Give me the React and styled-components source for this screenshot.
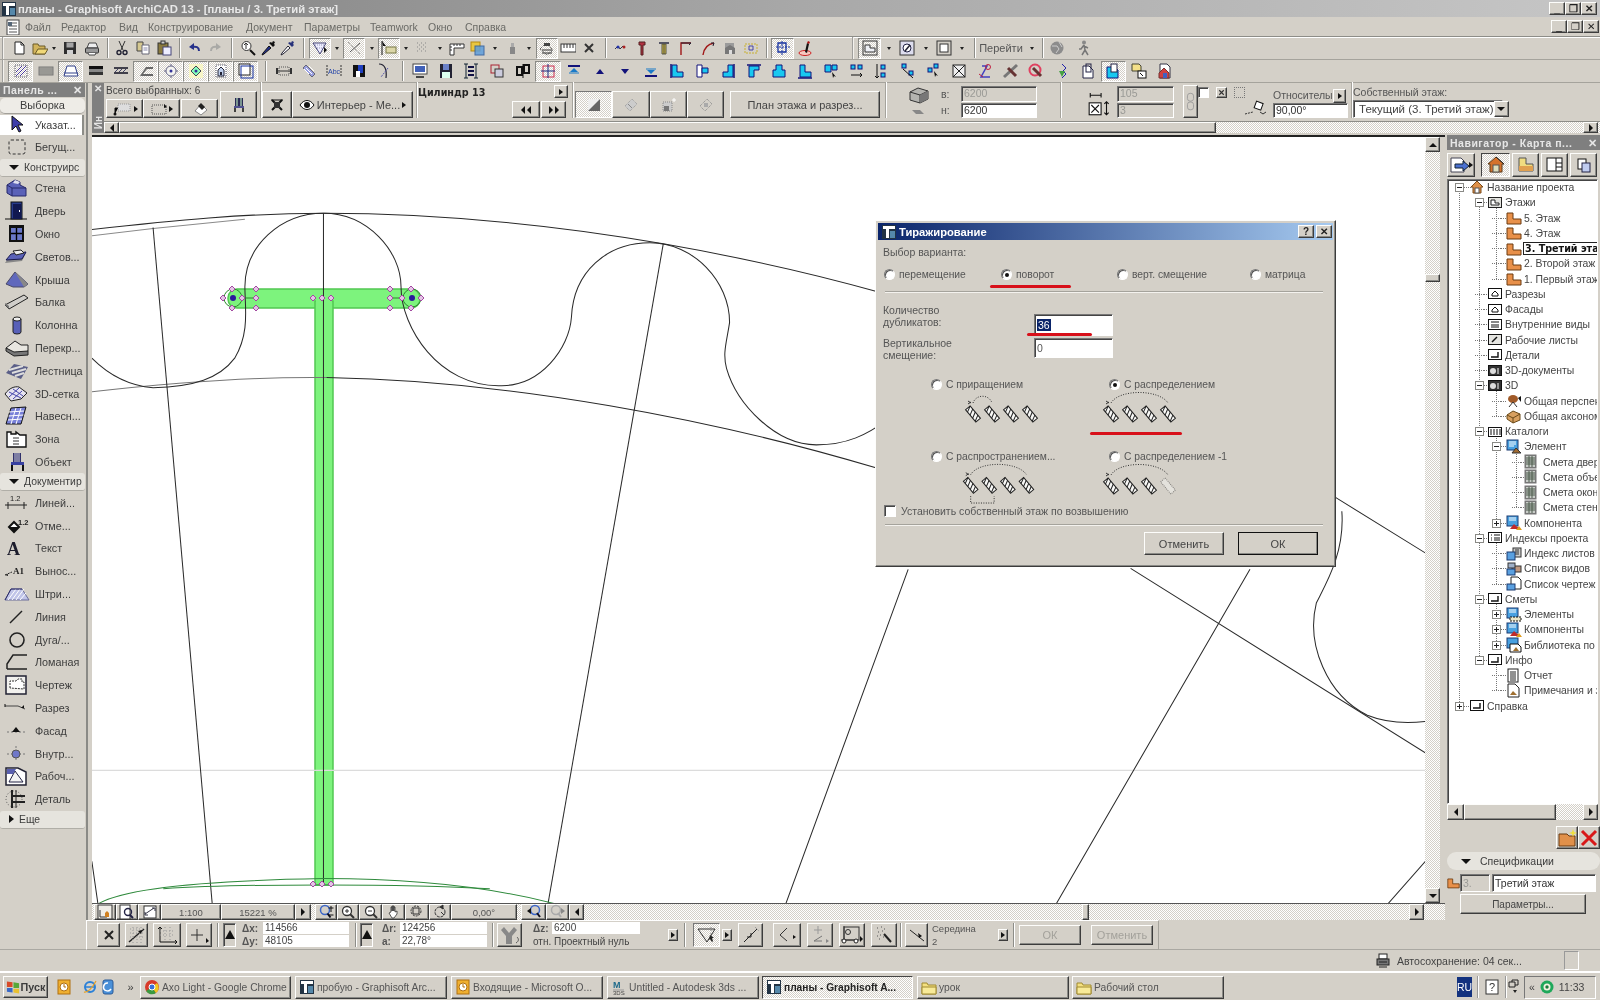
import React from 'react';
import styled, { createGlobalStyle, css } from 'styled-components';

const Global = createGlobalStyle`
  html, body { margin: 0; padding: 0; background: #d4d0c8; }
  * { box-sizing: border-box; }
`;

const FACE = '#d4d0c8';
const raised = css`
  background: ${FACE};
  border: 1px solid;
  border-color: #fdfdfb #3c3c3c #3c3c3c #fdfdfb;
  box-shadow: inset -1px -1px 0 #8a8a86;
`;
const sunken = css`
  border: 1px solid;
  border-color: #777 #fff #fff #777;
  box-shadow: inset 1px 1px 0 #444;
`;
const dither = css`
  background: repeating-conic-gradient(#fff 0 25%, ${FACE} 0 50%) 0 0 / 2px 2px;
`;

const Screen = styled.div`
  position: relative;
  width: 1600px;
  height: 1000px;
  overflow: hidden;
  display: flex;
  flex-direction: column;
  background: ${FACE};
  font: 11px "Liberation Sans", Arial, sans-serif;
  color: #3c3c3c;
  filter: blur(0.45px);
`;

/* ---------- window chrome ---------- */
const TitleBar = styled.div`
  height: 17px;
  flex: none;
  display: flex;
  align-items: center;
  padding: 0 2px 0 1px;
  gap: 1px;
  background: linear-gradient(90deg, #7e7e7e, #a8a8a8 50%, #c6c6c6);
  color: #e8e8e8;
  font-weight: 700;
  font-size: 11.3px;
`;
const Grow = styled.div`flex: 1;`;
const WinBtn = styled.div`
  ${raised}
  width: 16px;
  height: 13px;
  display: flex;
  align-items: center;
  justify-content: center;
  font-size: 10px;
  line-height: 1;
  color: #222;
`;
const WinBtns = styled.div`
  display: flex;
  margin-right: 1px;
`;
const MenuBar = styled.div`
  height: 20px;
  flex: none;
  display: flex;
  align-items: center;
  padding-left: 5px;
  border-bottom: 1px solid #8d8d88;
  box-shadow: 0 1px 0 #fff;
`;
const MenuItem = styled.span`
  color: #6a6a66;
  font-size: 10.5px;
  width: ${p => p.$w}px;
  white-space: nowrap;
`;
const MenuIcon = styled.div`
  width: 20px;
  display: flex;
`;

/* ---------- toolbars ---------- */
const ToolRow = styled.div`
  height: 23px;
  flex: none;
  display: flex;
  align-items: center;
  padding-left: 2px;
  border-bottom: 1px solid #a5a39c;
`;
const ToolStrip = styled.div`
  display: flex;
  align-items: center;
  height: 22px;
  margin-left: ${p => p.$ml || 0}px;
  padding-left: 4px;
  border-left: 2px groove #f4f2ee;
`;
const Tool = styled.div`
  width: ${p => p.$w}px;
  height: 21px;
  flex: none;
  display: flex;
  align-items: center;
  justify-content: center;
  ${p => p.$on && css`
    ${dither}
    border: 1px solid;
    border-color: #8a8a86 #fff #fff #8a8a86;
  `}
`;
const Drop = styled.div`
  width: ${p => p.$w}px;
  height: 21px;
  flex: none;
  display: flex;
  align-items: center;
  justify-content: center;
  &::after {
    content: "";
    border: 2.5px solid transparent;
    border-top: 3px solid #222;
    border-bottom: 0;
  }
`;
const ToolSep = styled.div`
  width: ${p => p.$w}px;
  height: 20px;
  flex: none;
  position: relative;
  &::after {
    content: "";
    position: absolute;
    left: 50%;
    top: 0;
    bottom: 0;
    border-left: 1px solid #8d8d88;
    box-shadow: 1px 0 0 #fff;
  }
`;
const GoText = styled.span`
  width: 48px;
  text-align: center;
  color: #555;
  font-size: 11px;
`;

/* ---------- page body ---------- */
const Body = styled.div`
  flex: none;
  height: 837px;
  display: grid;
  grid-template-columns: 92px 1353px 155px;
  grid-template-rows: 52px 785px;
`;

/* left palette */
const Palette = styled.div`
  grid-column: 1;
  grid-row: 1 / 3;
  width: 88px;
  display: flex;
  flex-direction: column;
  border-right: 2px solid #8a8a86;
  padding-right: 1px;
`;
const PanelTitle = styled.div`
  height: 14px;
  flex: none;
  display: flex;
  justify-content: space-between;
  align-items: center;
  padding: 0 3px;
  background: #7f7f7f;
  color: #e6e6e6;
  font-weight: 700;
  font-size: 10.5px;
  letter-spacing: .4px;
`;
const PickBtn = styled.div`
  height: 16px;
  margin: 1px 0;
  flex: none;
  border-radius: 5px;
  background: #eeece7;
  border-bottom: 1px solid #a2a09a;
  text-align: center;
  line-height: 15px;
`;
const PalItem = styled.div`
  height: ${p => p.$h || 22.8}px;
  flex: none;
  display: grid;
  grid-template-columns: 35px 1fr;
  align-items: center;
  font-size: 10.8px;
  white-space: nowrap;
  overflow: hidden;
  ${p => p.$sel && css`background: #fff; border-right: 2px solid #8d8d88; margin-right:1px;`}
`;
const PalIcon = styled.div`
  display: flex;
  justify-content: center;
  padding-right: 1px;
`;
const PalHead = styled.div`
  height: 18px;
  flex: none;
  display: flex;
  align-items: center;
  gap: 5px;
  padding-left: 9px;
  background: #e6e4de;
  border-radius: 3px;
  border-bottom: 1px solid #b0aea7;
  font-size: 10.4px;
  white-space: nowrap;
`;
const TriDown = styled.span`
  border: 5px solid transparent;
  border-top: 5px solid #111;
  border-bottom: 0;
  flex: none;
`;
const TriRight = styled.span`
  border: 4px solid transparent;
  border-left: 5px solid #111;
  border-right: 0;
  flex: none;
`;

/* info box */
const InfoArea = styled.div`
  grid-column: 2 / 4;
  grid-row: 1;
  display: grid;
  grid-template-columns: 12px 1fr;
  grid-template-rows: 39px 13px;
`;
const InfoGrip = styled.div`
  grid-row: 1 / 3;
  background: #7f7f7f;
  color: #e6e6e6;
  display: flex;
  flex-direction: column;
  justify-content: space-between;
  align-items: center;
  font-size: 10px;
  font-weight: 700;
  padding-bottom: 4px;
  height: 50px;
`;
const GripLabel = styled.span`
  writing-mode: vertical-rl;
  transform: rotate(180deg);
`;
const InfoRow = styled.div`
  display: flex;
  align-items: flex-end;
  padding: 0 0 3px 2px;
  border-bottom: 1px solid #8d8d88;
`;
const InfoGroup = styled.div`
  width: ${p => p.$w}px;
  margin-left: ${p => p.$ml || 0}px;
  flex: none;
  display: flex;
  align-items: flex-end;
`;
const InfoStack = styled.div`
  display: flex;
  flex-direction: column;
  gap: ${p => p.$gap || 0}px;
  width: ${p => p.$w}px;
  margin-left: ${p => p.$ml || 0}px;
  flex: none;
`;
const InfoLabel = styled.div`
  font-size: 10px;
  letter-spacing: .1px;
  height: 16px;
  line-height: 15px;
  color: #444;
  white-space: nowrap;
`;
const Bevel = styled.div`
  ${raised}
  width: ${p => p.$w}px;
  height: ${p => p.$h}px;
  margin-left: ${p => p.$ml || 0}px;
  flex: none;
  display: flex;
  align-items: center;
  justify-content: center;
  gap: 2px;
  font-size: 11px;
  color: #444;
  white-space: nowrap;
  ${p => p.$on && css`
    ${dither}
    border-color: #777 #fff #fff #777;
    box-shadow: none;
  `}
`;
const SmallTriR = styled.span`
  border: 3px solid transparent;
  border-left: 4px solid #111;
  border-right: 0;
`;
const BoldTitle = styled.div`
  font: 700 9.6px "DejaVu Sans", sans-serif;
  color: #222;
  white-space: nowrap;
`;
const Field = styled.div`
  ${sunken}
  width: ${p => p.$w}px;
  height: ${p => p.$h || 15}px;
  margin-left: ${p => p.$ml || 0}px;
  flex: none;
  background: ${p => (p.$off ? FACE : '#fff')};
  color: ${p => (p.$off ? '#9a9a96' : '#333')};
  padding: 0 2px;
  font-size: 10.5px;
  line-height: 13px;
  white-space: nowrap;
  overflow: hidden;
`;
const MiniLabel = styled.div`
  width: ${p => p.$w}px;
  font-size: 10.5px;
  color: #555;
  height: ${p => p.$h}px;
  line-height: ${p => p.$h}px;
  white-space: nowrap;
`;
const Rule = styled.div`
  width: 2px;
  height: 36px;
  margin-left: ${p => p.$ml || 0}px;
  flex: none;
  border-left: 1px solid #a5a39c;
  border-right: 1px solid #fff;
`;
const CheckCol = styled.div`
  width: 70px;
  height: 33px;
  flex: none;
  display: flex;
  flex-direction: column;
  justify-content: space-between;
  align-items: flex-end;
  padding-top: 2px;
`;
const CheckBoxes = styled.div`
  display: flex;
  gap: 7px;
  align-self: flex-start;
`;
const BoxDotted = styled.div`
  width: 11px;
  height: 11px;
  border: 1px dotted #777;
`;
const SelectBox = styled.div`
  ${sunken}
  width: 150px;
  height: 18px;
  background: #fff;
  display: flex;
  align-items: center;
  justify-content: space-between;
  padding-left: 5px;
  font-size: 11.5px;
  color: #444;
  white-space: nowrap;
`;
const SelectArrow = styled.div`
  ${raised}
  width: 15px;
  height: 16px;
  display: flex;
  align-items: center;
  justify-content: center;
  flex: none;
  &::after {
    content: "";
    border: 4px solid transparent;
    border-top: 4px solid #111;
    border-bottom: 0;
  }
`;
const ScrollStrip = styled.div`
  ${dither}
  display: flex;
  align-items: stretch;
  height: 11px;
  margin-top: 0;
`;
const StripBtn = styled.div`
  ${raised}
  width: ${p => p.$w}px;
  height: 11px;
  flex: none;
  ${p => p.$last && 'margin-left: auto; margin-right: 2px;'}
  display: flex;
  align-items: center;
  justify-content: center;
`;

/* canvas */
const CanvasCol = styled.div`
  grid-column: 2;
  grid-row: 2;
  display: flex;
  flex-direction: column;
  border-top: 2px solid #222;
  height: 785px;
`;
const CanvasRow = styled.div`
  display: flex;
  height: 766px;
  flex: none;
`;
const Canvas = styled.svg`
  display: block;
  width: 1333px;
  height: 766px;
  background: #fff;
  flex: none;
`;
const VScroll = styled.div`
  ${dither}
  width: 15px;
  flex: none;
  display: flex;
  flex-direction: column;
  justify-content: space-between;
`;
const ScrollBtn = styled.div`
  ${raised}
  width: 15px;
  height: 15px;
  display: flex;
  align-items: center;
  justify-content: center;
  flex: none;
`;
const Thumb = styled.div`
  ${raised}
  width: 15px;
  height: 8px;
  margin-top: 122px;
  margin-bottom: auto;
`;
const ArrowUp = styled.span`
  border: 4px solid transparent;
  border-bottom: 4px solid #111;
  border-top: 0;
`;
const ArrowDown = styled.span`
  border: 4px solid transparent;
  border-top: 4px solid #111;
  border-bottom: 0;
`;
const ArrowLeft = styled.span`
  border: 4px solid transparent;
  border-right: 4px solid #111;
  border-left: 0;
`;
const ArrowRight = styled.span`
  border: 4px solid transparent;
  border-left: 4px solid #111;
  border-right: 0;
`;
const BottomBar = styled.div`
  height: 17px;
  flex: none;
  display: flex;
  align-items: stretch;
  ${dither}
  border-top: 1px solid #555;
  padding-left: 2px;
`;
const BarBtn = styled.div`
  ${raised}
  width: ${p => p.$w}px;
  margin-left: ${p => p.$ml || 0}px;
  flex: none;
  display: flex;
  align-items: center;
  justify-content: center;
  font-size: 9.5px;
  color: #555;
`;
const BarEnd = styled(BarBtn)`
  margin-left: ${p => p.$ml}px;
`;

/* navigator */
const Nav = styled.div`
  grid-column: 3;
  grid-row: 2;
  display: flex;
  flex-direction: column;
  padding-left: 2px;
`;
const NavTitle = styled(PanelTitle)`
  height: 15px;
  letter-spacing: .5px;
  margin-right: 0;
`;
const NavTabs = styled.div`
  display: flex;
  height: 25px;
  align-items: center;
  margin-top: 2px;
  flex: none;
`;
const NavTab = styled.div`
  ${raised}
  width: ${p => p.$w}px;
  height: 24px;
  margin-left: ${p => p.$ml || 0}px;
  flex: none;
  display: flex;
  align-items: center;
  justify-content: center;
  ${p => p.$on && css`
    ${dither}
    border-color: #444 #fff #fff #444;
    box-shadow: none;
  `}
`;
const Tree = styled.div`
  position: relative;
  height: 625px;
  width: 151px;
  flex: none;
  margin-top: 2px;
  background: #fff;
  ${sunken}
  padding-top: 0;
  overflow: hidden;
`;
const TreeRow = styled.div`
  height: 15.25px;
  display: flex;
  align-items: center;
  padding-left: ${p => p.$pad}px;
  white-space: nowrap;
  position: relative;
  font-size: 10.4px;
  color: #444;
`;
const Guide = styled.div`
  position: absolute;
  left: ${p => p.$x}px;
  top: ${p => p.$from * 15.25 + 7}px;
  height: ${p => (p.$to - p.$from) * 15.25}px;
  border-left: 1px dotted #777;
`;
const Expander = styled.div`
  width: 9px;
  height: 9px;
  flex: none;
  border: 1px solid #8a8a86;
  background: #fff;
  position: relative;
  z-index: 1;
  &::before {
    content: "";
    position: absolute;
    left: 1px; right: 1px; top: 3px;
    border-top: 1px solid #222;
  }
  ${p => p.$plus && css`
    &::after {
      content: "";
      position: absolute;
      top: 1px; bottom: 1px; left: 3px;
      border-left: 1px solid #222;
    }
  `}
`;
const Dots = styled.div`
  width: ${p => p.$w}px;
  flex: none;
  border-top: 1px dotted #777;
`;
const TreeIcon = styled.div`
  width: ${p => p.$w}px;
  height: 15px;
  flex: none;
  display: flex;
  align-items: center;
  justify-content: center;
`;
const TreeText = styled.span`
  margin-left: ${p => p.$ml}px;
  ${p => p.$bold && css`
    font: 700 9.6px "DejaVu Sans", sans-serif;
    color: #111;
    outline: 1px solid #222;
    padding: 0 0 0 1px;
  `}
`;
const NavScroll = styled.div`
  ${dither}
  height: 16px;
  width: 151px;
  display: flex;
  flex: none;
`;
const NavScrollBtn = styled(ScrollBtn)`
  width: ${p => p.$w}px;
  height: 16px;
  margin-right: ${p => p.$mr || 0}px;
`;
const NavActions = styled.div`
  height: 29px;
  display: flex;
  justify-content: flex-end;
  align-items: flex-end;
  flex: none;
  padding-right: 0;
`;
const NavSquare = styled(NavTab)`
  height: 23px;
  width: 22px;
`;
const SpecHead = styled.div`
  height: 18px;
  margin-top: 3px;
  flex: none;
  display: flex;
  align-items: center;
  gap: 9px;
  padding-left: 14px;
  background: #e6e4de;
  border-radius: 9px;
  font-size: 10.5px;
`;
const SpecRow = styled.div`
  display: flex;
  align-items: center;
  margin-top: 3px;
  flex: none;
  height: 19px;
`;
const SpecInput = styled(Field)`
  height: 18px;
  line-height: 16px;
  font-size: 10.5px;
`;
const ParamBtn = styled(Bevel)`
  margin: 2px 0 0 13px;
  font-size: 10px;
`;

/* coordinate bar */
const CoordBar = styled.div`
  height: 30px;
  flex: none;
  display: flex;
  align-items: center;
  padding-left: 86px;
  border-bottom: 1px solid #aaa8a2;
`;
const CoordInner = styled.div`
  display: flex;
  align-items: center;
  height: 30px;
  width: 1073px;
  border: 1px solid #a5a39c;
  border-left-color: #fff;
  border-top-color: #fff;
  padding-left: 10px;
`;
const Glass = styled.div`
  ${raised}
  width: ${p => p.$w}px;
  height: 24px;
  margin-left: ${p => p.$ml || 0}px;
  flex: none;
  display: flex;
  align-items: center;
  justify-content: center;
  ${p => p.$on && css`
    ${dither}
    border-color: #777 #fff #fff #777;
    box-shadow: none;
  `}
`;
const CoordSep = styled.div`
  width: 2px;
  height: 24px;
  flex: none;
  margin-left: ${p => p.$ml}px;
  border-left: 1px solid #8d8d88;
  border-right: 1px solid #fff;
`;
const CoordPair = styled.div`
  display: grid;
  grid-template-columns: ${p => p.$label}px ${p => p.$field}px;
  grid-auto-rows: 13px;
  align-items: center;
  margin-left: ${p => p.$ml}px;
  flex: none;
  font-size: 10px;
`;
const CoordValue = styled.div`
  background: #fff;
  height: 12px;
  padding-left: 2px;
  line-height: 12px;
  font-size: 10px;
  color: #444;
  overflow: hidden;
`;
const CoordTag = styled.div`
  font-size: 10px;
  font-weight: 700;
  color: #555;
`;
const CoordNote = styled.div`
  grid-column: 1 / 3;
  font-size: 10px;
  color: #444;
  white-space: nowrap;
`;
const TriBox = styled.div`
  ${sunken}
  width: 13px;
  height: 24px;
  margin-left: ${p => p.$ml}px;
  flex: none;
  display: flex;
  align-items: center;
  justify-content: center;
  &::after {
    content: "";
    border: 5px solid transparent;
    border-bottom: 9px solid #111;
    border-top: 0;
  }
`;
const TinyArrow = styled.div`
  ${raised}
  width: 10px;
  height: 12px;
  margin-left: ${p => p.$ml}px;
  flex: none;
  display: flex;
  align-items: center;
  justify-content: center;
`;
const SnapText = styled.div`
  width: 68px;
  margin-left: 4px;
  flex: none;
  font-size: 9.5px;
  color: #555;
  line-height: 13px;
`;
const GhostBtn = styled(Glass)`
  height: 20px;
  font-size: 11px;
  color: #a3a19b;
`;

/* status bar */
const StatusBar = styled.div`
  height: 22px;
  flex: none;
  display: flex;
  align-items: center;
  padding-left: 1375px;
  gap: 6px;
  font-size: 10.5px;
  color: #444;
  border-bottom: 1px solid #fff;
`;
const StatusBox = styled.div`
  width: 15px;
  height: 19px;
  margin-left: 36px;
  flex: none;
  border: 1px solid;
  border-color: #999 #fff #fff #999;
`;

/* taskbar */
const Taskbar = styled.div`
  flex: 1;
  display: flex;
  align-items: center;
  padding-left: 3px;
  padding-top: 1px;
  border-top: 1px solid #fff;
`;
const Start = styled.div`
  ${raised}
  width: 45px;
  height: 22px;
  display: flex;
  align-items: center;
  justify-content: center;
  gap: 1px;
  font-weight: 700;
  font-size: 10.8px;
  flex: none;
`;
const QuickIcon = styled.div`
  width: ${p => p.$w}px;
  margin-left: ${p => p.$ml || 0}px;
  flex: none;
  display: flex;
  align-items: center;
  justify-content: center;
  height: 22px;
`;
const TaskBtn = styled.div`
  ${raised}
  width: ${p => p.$w}px;
  height: 23px;
  margin-left: ${p => p.$ml || 3}px;
  flex: none;
  display: flex;
  align-items: center;
  gap: 2px;
  padding-left: 3px;
  font-size: 10.3px;
  color: #555;
  white-space: nowrap;
  ${p => p.$on && css`
    ${dither}
    border-color: #444 #fff #fff #444;
    box-shadow: none;
    font-weight: 700;
    color: #222;
    font-size: 10.2px;
  `}
`;
const Lang = styled.div`
  margin-left: 233px;
  width: 15px;
  height: 20px;
  flex: none;
  background: #13327f;
  color: #fff;
  font-size: 10.5px;
  display: flex;
  align-items: center;
  justify-content: center;
`;
const TraySep = styled.div`
  width: 2px;
  height: 22px;
  margin-left: 5px;
  flex: none;
  border-left: 1px solid #999;
  border-right: 1px solid #fff;
`;
const Clock = styled.div`
  ${sunken}
  box-shadow: none;
  width: 72px;
  height: 23px;
  margin-left: 2px;
  flex: none;
  display: flex;
  align-items: center;
  gap: 4px;
  padding-left: 4px;
  font-size: 10.5px;
  color: #444;
`;

/* dialog */
const Dialog = styled.div`
  position: absolute;
  left: 875px;
  top: 220px;
  width: 461px;
  height: 347px;
  ${raised}
  padding: 2px;
  display: flex;
  flex-direction: column;
`;
const DlgTitle = styled.div`
  height: 17px;
  flex: none;
  display: flex;
  align-items: center;
  gap: 2px;
  padding: 0 1px 0 3px;
  background: linear-gradient(90deg, #0a246a, #a6caf0);
  color: #fff;
  font-weight: 700;
  font-size: 11.2px;
`;
const DlgBody = styled.div`
  flex: 1;
  padding: 0 6px 0 5px;
  display: flex;
  flex-direction: column;
  position: relative;
  font-size: 10.3px;
  color: #555;
`;
const DlgCaption = styled.div`
  height: 22px;
  line-height: 24px;
  flex: none;
  font-size: 10.5px;
`;
const RadioRow = styled.div`
  display: grid;
  grid-template-columns: 117px 116px 133px 1fr;
  height: 22px;
  margin-left: 0;
  align-items: center;
  flex: none;
  padding-top: 2px;
`;
const Radio = styled.span`
  width: 11px;
  height: 11px;
  margin: 0 4px 0 1px;
  flex: none;
  display: inline-block;
  border-radius: 50%;
  background: #fff;
  border: 1px solid #777;
  border-right-color: #fff;
  border-bottom-color: #fff;
  box-shadow: inset 1px 1px 0 #555;
  position: relative;
  ${p => p.$on && css`
    &::after {
      content: "";
      position: absolute;
      left: 3px; top: 3px;
      width: 4px; height: 4px;
      border-radius: 50%;
      background: #111;
    }
  `}
`;
const RadioCell = styled.label`
  display: flex;
  align-items: center;
  white-space: nowrap;
`;
const DlgRule = styled.div`
  height: 2px;
  flex: none;
  margin: ${p => p.$m};
  border-top: 1px solid #a5a39c;
  border-bottom: 1px solid #f4f2ee;
`;
const CountGrid = styled.div`
  display: grid;
  grid-template-columns: 151px 79px;
  grid-template-rows: 33px 33px;
  margin-top: 11px;
  flex: none;
  line-height: 12px;
  font-size: 10.5px;
`;
const DlgLabel = styled.div`
  align-self: start;
`;
const DlgField = styled.div`
  ${sunken}
  background: #fff;
  display: flex;
  align-items: center;
  padding-left: 2px;
  margin-top: ${p => p.$mt}px;
  height: ${p => p.$h}px;
  color: #555;
`;
const Selected = styled.span`
  background: #0a246a;
  color: #fff;
  padding: 0 1px;
`;
const OptGrid = styled.div`
  display: grid;
  grid-template-columns: 178px 200px;
  grid-template-rows: 72px 53px;
  margin: 9px 0 0 47px;
  flex: none;
`;
const Opt = styled.div`
  display: flex;
  flex-direction: column;
`;
const Diagram = styled.svg`
  display: block;
  margin-left: ${p => p.$ml}px;
  margin-top: -3px;
`;
const CheckRow = styled.label`
  display: flex;
  align-items: center;
  gap: 5px;
  height: 16px;
  margin: -1px 0 0 1px;
  flex: none;
  font-size: 10.5px;
`;
const Check = styled.span`
  ${sunken}
  width: 12px;
  height: 12px;
  background: #fff;
  display: inline-block;
`;
const DlgButtons = styled.div`
  display: flex;
  justify-content: flex-end;
  gap: 14px;
  padding-right: 9px;
  margin-top: 6px;
`;
const DlgBtn = styled.div`
  ${raised}
  width: 80px;
  height: 23px;
  display: flex;
  align-items: center;
  justify-content: center;
  color: #444;
  font-size: 11px;
  ${p => p.$def && 'outline: 1px solid #111; outline-offset: -1px;'}
`;
const RedMark = styled.div`
  position: absolute;
  left: ${p => p.$x}px;
  top: ${p => p.$y}px;
  width: ${p => p.$w}px;
  height: 3px;
  border-radius: 2px;
  background: #d8101a;
`;
const TitleGlyphs = styled.div`
  display: flex;
  gap: 2px;
`;

/* ---------- icons ---------- */
const Svg = styled.svg`
  display: block;
  flex: none;
`;
const Ic = ({ n, w = 16, h = 16, vb }) => (
  <Svg width={w} height={h} viewBox={vb || `0 0 ${w} ${h}`}>{G[n]}</Svg>
);
const blue = '#18c8f0';
const nv = '#12127a';
const G = {
  app: <><rect x="1" y="1" width="14" height="14" fill="#234"/><path d="M2 2h12v3H8v9H5V5H2z" fill="#fff"/><path d="M9 7h5v7H9z" fill="#58a"/></>,
  menuDoc: <><rect x="2" y="1" width="12" height="15" fill="#fff" stroke="#444"/><path d="M4 4h8M4 7h8M4 10h8M4 13h8" stroke="#555"/><rect x="3" y="3" width="4" height="4" fill="#567"/></>,
  doc: <><path d="M4 2h6l3 3v9H4z" fill="#fff" stroke="#222"/><path d="M10 2v3h3" fill="none" stroke="#222"/></>,
  open: <><path d="M1 4h5l1 2h6v8H1z" fill="#d2b45c" stroke="#6a5a28"/><path d="M3 14l3-5h10l-3 5z" fill="#f0d878" stroke="#6a5a28"/></>,
  save: <><rect x="2" y="2" width="12" height="12" fill="#2e2e2e"/><rect x="4.5" y="2.5" width="7" height="5" fill="#a4a4a4"/><rect x="5" y="10" width="6" height="4" fill="#d0d0d0"/></>,
  print: <><path d="M3 8l2-5h7l2 5z" fill="#eee" stroke="#444"/><rect x="1.5" y="8" width="13" height="5" rx="1" fill="#999" stroke="#333"/><path d="M4 13l1 2h6l1-2" fill="#fff" stroke="#444"/></>,
  cut: <><path d="M5 1l4 9M11 1L7 10" stroke="#333" fill="none"/><circle cx="5" cy="12.5" r="2" fill="none" stroke="#223" strokeWidth="1.4"/><circle cx="11" cy="12.5" r="2" fill="none" stroke="#223" strokeWidth="1.4"/></>,
  copy: <><path d="M2 2h6v9H2z" fill="#d5c890" stroke="#444"/><path d="M7 5h7v9H7z" fill="#fff" stroke="#667"/><path d="M8.500 8h4M8.500 10h4" stroke="#88a"/></>,
  paste: <><rect x="2" y="3" width="10" height="11" fill="#8a7a3e" stroke="#333"/><rect x="5" y="1" width="4" height="3" fill="#ccc" stroke="#333"/><rect x="7" y="7" width="8" height="8" fill="#eef" stroke="#447"/></>,
  undo: <><path d="M12 11c0-4-3-5-7-4" fill="none" stroke="#26318a" strokeWidth="2"/><path d="M7 3L2 7l5 3z" fill="#26318a"/></>,
  redo: <><path d="M4 11c0-4 3-5 7-4" fill="none" stroke="#a9a9a6" strokeWidth="2"/><path d="M9 3l5 4-5 3z" fill="#a9a9a6"/></>,
  find: <><circle cx="6.500" cy="6" r="4.500" fill="#fff" stroke="#333"/><path d="M6 3v6M4 5l2-2 2 2" stroke="#333" fill="none"/><path d="M10 10l5 5" stroke="#111" strokeWidth="2"/></>,
  drop1: <><path d="M9 6l-6 7-1 2 2-1 7-6z" fill="#23308c" stroke="#111"/><path d="M9 3l4 4 2-2-1-1 1-2-2-1-1 2-1-1z" fill="#111"/></>,
  drop2: <><path d="M9 6l-6 7-1 2 2-1 7-6z" fill="#fff" stroke="#223"/><path d="M9 3l4 4 2-2-1-1 1-2-2-1-1 2-1-1z" fill="#27327a"/></>,
  tri: <><path d="M1 3h13L8 14z" fill="#eef" stroke="#447"/><path d="M3 5h9M5 8h6" stroke="#99b" strokeDasharray="1 1"/><path d="M12 7l3 3-3 3z" fill="#111"/></>,
  snapx: <><path d="M2 2l12 12" stroke="#777" strokeDasharray="1 1"/><path d="M14 3L4 12" stroke="#555"/></>,
  lrule: <><path d="M1 1v14" stroke="#111" /><path d="M1 1l4 5H2" fill="#111"/><rect x="5" y="7" width="10" height="6" fill="#dcd7a8" stroke="#774"/></>,
  dots: <path d="M3 3h1M7 3h1M11 3h1M3 7h1M7 7h1M11 7h1M3 11h1M7 11h1M11 11h1M5 5h1M9 5h1M5 9h1M9 9h1" stroke="#888"/>,
  rul: <><path d="M1 15V4h14v4H5v7z" fill="#fff" stroke="#333"/><path d="M5 4v2M8 4v2M11 4v2M1 7h2M1 10h2" stroke="#333"/></>,
  layer: <><rect x="2" y="2" width="9" height="9" fill="#e9c640" stroke="#b68a10"/><rect x="6" y="6" width="9" height="9" fill="#5e9edc" stroke="#2a5a9c" opacity=".85"/></>,
  small: <><rect x="6" y="7" width="5" height="7" fill="#888"/><rect x="7" y="3" width="3" height="4" fill="#aaa"/></>,
  hat: <><path d="M1 9l6-6 7 7-6 5z" fill="none" stroke="#333" strokeDasharray="1 1"/><rect x="5" y="3" width="6" height="3" fill="#444"/><path d="M3 10h10M3 13h10" stroke="#333"/></>,
  rul2: <><rect x="1" y="4" width="15" height="8" fill="#fff" stroke="#333"/><path d="M4 4v4M7 4v4M10 4v4M13 4v4" stroke="#333"/></>,
  x: <path d="M4 4l8 8M12 4l-8 8" stroke="#333" strokeWidth="2"/>,
  t1: <><path d="M2 9l3-3 2 3 3-3 2 2" fill="none" stroke="#334" /><circle cx="5" cy="7" r="1.500" fill="#23a"/><circle cx="11" cy="7" r="1.500" fill="#a22"/></>,
  t2: <><path d="M5 2h6v3H9v10H7V5H5z" fill="#b03040" stroke="#522"/></>,
  t3: <><path d="M3 2h10v2H3z" fill="#556"/><path d="M6 4h4v10H6z" fill="#d8c040" stroke="#554"/><path d="M8 4v10" stroke="#444"/></>,
  t4: <><path d="M3 15V3h10" fill="none" stroke="#a01818" strokeWidth="1.4"/><path d="M3 3h10l-2 2" fill="none" stroke="#223"/></>,
  t5: <><path d="M3 15C4 8 8 4 14 3" fill="none" stroke="#a01818" strokeWidth="1.4"/><path d="M14 3l-3 0m3 0l-1 3" stroke="#223"/></>,
  t6: <><path d="M3 3h9v11H3z" fill="#9a9a9a"/><path d="M3 8l5-3 5 3v6H3z" fill="#777"/><rect x="7" y="10" width="3" height="4" fill="#ddd"/></>,
  t7: <><rect x="2" y="4" width="12" height="9" fill="none" stroke="#c8b030" strokeDasharray="2 1"/><path d="M6 6h4v4H6z" fill="none" stroke="#4444aa"/></>,
  t8: <><path d="M3 3h8v9H3z" fill="none" stroke="#1530a0" strokeWidth="1.3"/><path d="M7 1v14M1 7h14" stroke="#1530a0" strokeDasharray="2 1"/></>,
  pen: <><ellipse cx="8" cy="13" rx="6" ry="2.500" fill="#f6c8c0" stroke="#c22"/><path d="M8 12l2-9 2 1-2 9z" fill="#111"/><path d="M10 3l2 1 1-2-2-1z" fill="#a11"/></>,
  plan: <><rect x="1" y="1" width="14" height="14" fill="none" stroke="#333"/><path d="M3 12V5h5v3h5v4z" fill="#eef0f6" stroke="#333"/></>,
  sec: <><rect x="1" y="1" width="14" height="14" fill="#dde" stroke="#333"/><circle cx="8" cy="8" r="4" fill="#fff" stroke="#224"/><path d="M6 11l5-6" stroke="#223" strokeWidth="1.500"/></>,
  box: <><rect x="1" y="1" width="14" height="14" fill="none" stroke="#333"/><rect x="4" y="4" width="8" height="8" fill="#fff" stroke="#333"/></>,
  globe: <><circle cx="8" cy="8" r="6.500" fill="#8c8c8c"/><path d="M3 6h5l2 3-3 4M10 2l3 5" stroke="#ccc" fill="none"/></>,
  walk: <><circle cx="9" cy="2.500" r="2" fill="#888"/><path d="M9 5L6 9l-2 0M9 5l1 5-3 5M10 10l3 5M9 6l4 2" stroke="#777" strokeWidth="1.500" fill="none"/></>,
  h1: <><rect x="2" y="2" width="12" height="12" fill="none" stroke="#556" strokeDasharray="1 1"/><path d="M3 13L13 3M3 9l6-6M7 13l6-6" stroke="#4a3a9a"/></>,
  h2: <><rect x="1" y="4" width="14" height="8" fill="#a9a8a0" stroke="#777"/><path d="M1 6h14M1 8h14M1 10h14" stroke="#888"/></>,
  h3: <><path d="M4 3h8l3 10H1z" fill="#fff" stroke="#30408a"/><path d="M1 10h14" stroke="#30408a"/></>,
  h4: <><rect x="1" y="3" width="14" height="3" fill="#111"/><rect x="1" y="6" width="14" height="3" fill="#888"/><rect x="1" y="9" width="14" height="3" fill="#333"/></>,
  h5: <><path d="M1 5h14M1 10h14" stroke="#112" strokeWidth="1.500"/><path d="M2 9l3-3M6 9l3-3M10 9l3-3" stroke="#446"/></>,
  h6: <><path d="M2 13l6-9h7v2H9l-4 5h10v2z" fill="#666"/></>,
  h7: <><circle cx="8" cy="8" r="5" fill="#f4f4f0" stroke="#668"/><circle cx="8" cy="8" r="1.500" fill="#339"/><path d="M1 8h2M13 8h2M8 1v2M8 13v2" stroke="#668"/></>,
  h8: <><rect x="1" y="1" width="14" height="14" fill="#f8f6c8"/><path d="M3 8l5-5 5 5-5 5z" fill="#8fb" stroke="#445"/><circle cx="8" cy="8" r="1.500" fill="#339"/></>,
  h9: <><rect x="3" y="2" width="10" height="12" fill="#fff" stroke="#556" strokeDasharray="1 1"/><path d="M5 13V7l3-3 3 3v6z" fill="#c0d0ec" stroke="#223"/><rect x="7" y="9" width="2" height="3" fill="#223"/></>,
  h10: <><rect x="1" y="1" width="11" height="11" fill="#fff" stroke="#222"/><rect x="3" y="3" width="12" height="12" fill="none" stroke="#1530a0"/></>,
  d1: <><path d="M1 8h14" stroke="#333"/><rect x="3" y="4" width="10" height="8" fill="none" stroke="#555" strokeDasharray="1 1"/><path d="M1 5v6M15 5v6" stroke="#333" strokeWidth="2"/></>,
  d2: <><path d="M5 2l9 9-3 3-9-9z" fill="#9aa0e0" stroke="#667"/><path d="M5 5l6 6M3 6l5 5M8 3l5 5" stroke="#fff"/></>,
  d3: <><path d="M1 2v12M15 2v12" stroke="#333" strokeDasharray="2 1"/><text x="2" y="11" fontSize="7" fill="#2243a8" fontFamily="Liberation Sans">Abc</text></>,
  d4: <><rect x="2" y="2" width="12" height="12" fill="#111"/><path d="M7 2h5v8H7z" fill="#2040c0"/><path d="M5 8h4v6H5z" fill="#fff"/></>,
  d5: <><path d="M3 1c6 0 8 6 7 14" fill="none" stroke="#223" strokeWidth="1.200"/><path d="M12 5L5 14" stroke="#55a" strokeDasharray="2 1"/></>,
  e1: <><rect x="1" y="1" width="14" height="10" fill="#fff" stroke="#444"/><rect x="3" y="3" width="10" height="6" fill="#4060b8"/><path d="M4 14h8" stroke="#444" strokeWidth="2"/></>,
  e2: <><rect x="2" y="1" width="12" height="14" fill="#223"/><rect x="5" y="1" width="6" height="6" fill="#6a80c8"/><rect x="4" y="9" width="8" height="6" fill="#dfe"/></>,
  e3: <><path d="M3 1v14M13 1v14M1 1h4M11 1h4M1 15h4M11 15h4" stroke="#123"/><path d="M5 4h6M5 8h6M5 12h6" stroke="#114" strokeWidth="2"/></>,
  e4: <><rect x="2" y="2" width="8" height="8" fill="none" stroke="#a23" /><rect x="6" y="6" width="8" height="8" fill="#ccd" stroke="#333"/></>,
  e5: <><rect x="2" y="4" width="5" height="8" fill="none" stroke="#111" strokeWidth="2"/><rect x="9" y="2" width="5" height="8" fill="none" stroke="#111" strokeWidth="2"/><path d="M8 1v14" stroke="#111"/></>,
  e6: <><rect x="3" y="3" width="11" height="11" fill="none" stroke="#d03050"/><path d="M1 8h14M8 1v14" stroke="#1a2a80"/></>,
  a1: <><path d="M2 3h12" stroke={nv} strokeWidth="2"/><path d="M8 5l-4 4h8z" fill="#1a7ac8"/><path d="M3 10h10" stroke="#1a7ac8"/></>,
  a2: <path d="M8 6l-4 5h8z" fill={nv}/>,
  a3: <path d="M8 11L4 6h8z" fill={nv}/>,
  a4: <><path d="M3 6h10" stroke="#1a7ac8"/><path d="M8 11L4 7h8z" fill="#1a7ac8"/><path d="M2 13h12" stroke={nv} strokeWidth="2"/></>,
  c1: <><path d="M2 1v14" stroke={nv} strokeWidth="1.500"/><path d="M3 2h5v7h6v5H3z" fill={blue} stroke={nv}/></>,
  c2: <><path d="M3 2h5v12H3z" fill="#fff" stroke={nv}/><path d="M8 5h6v5H8z" fill={blue} stroke={nv}/></>,
  c3: <><path d="M14 1v14" stroke={nv} strokeWidth="1.500"/><path d="M8 2h5v12H3V9h5z" fill={blue} stroke={nv}/></>,
  c4: <><path d="M1 2h14" stroke={nv} strokeWidth="1.500"/><path d="M3 3h10v4H8v7H3z" fill={blue} stroke={nv}/></>,
  c5: <><path d="M5 2h6v5h3v7H2V7h3z" fill={blue} stroke={nv}/></>,
  c6: <><path d="M1 15h14" stroke={nv} strokeWidth="1.500"/><path d="M3 2h5v7h6v5H3z" fill={blue} stroke={nv}/></>,
  c7: <><path d="M2 2h6v7H2z" fill={blue} stroke={nv}/><path d="M9 2h5v5H9z" fill={blue} stroke={nv}/><path d="M9 9l4 5-2-1-1 2z" fill="#111"/></>,
  c8: <><rect x="2" y="2" width="4" height="4" fill={blue} stroke={nv}/><rect x="9" y="2" width="4" height="4" fill={blue} stroke={nv}/><path d="M2 12h11l-2-2m2 2l-2 2" stroke="#111" fill="none"/></>,
  c9: <><path d="M3 1v14M1 13l2 2 2-2" stroke="#111" fill="none"/><rect x="7" y="2" width="4" height="4" fill={blue} stroke={nv}/><rect x="7" y="10" width="4" height="4" fill={blue} stroke={nv}/></>,
  c10: <><rect x="2" y="1" width="4" height="4" fill={blue} stroke={nv}/><rect x="9" y="8" width="4" height="4" fill={blue} stroke={nv}/><path d="M3 6l10 9" stroke="#111"/></>,
  c11: <><rect x="2" y="5" width="4" height="4" fill={blue} stroke={nv}/><rect x="8" y="1" width="4" height="4" fill={blue} stroke={nv}/><path d="M8 8l4 5-2-1-1 2z" fill="#111"/></>,
  c12: <><rect x="2" y="2" width="12" height="12" fill="#eee" stroke="#222"/><path d="M2 2l12 12M14 2L2 14" stroke="#222"/></>,
  c13: <><path d="M5 3l5 0-6 11h9" fill="none" stroke="#4040c0" strokeWidth="1.500"/><circle cx="11" cy="4" r="2.500" fill="none" stroke="#c02040"/><path d="M2 11l4 3" stroke="#c02040"/></>,
  c14: <><path d="M1 14L14 2" stroke="#777" strokeWidth="3"/><path d="M5 5l8 8" stroke="#633" strokeWidth="3"/></>,
  c15: <><circle cx="7" cy="7" r="5.500" fill="none" stroke="#e04060" strokeWidth="2"/><path d="M5 5l8 8" stroke="#633" strokeWidth="3"/></>,
  c16: <><path d="M8 1l4 4-3 3 3 3-4 4" stroke="#22a" fill="none"/><path d="M5 8l3 6 3-6z" fill="#44a044"/></>,
  c17: <><path d="M3 3h6l4 4v8H3z" fill="#fff" stroke="#224"/><rect x="6" y="1" width="5" height="8" fill="none" stroke="#224"/></>,
  c18: <><path d="M2 4h6l5 3v8H2z" fill={blue} stroke={nv}/><rect x="6" y="1" width="6" height="8" fill="#fff" stroke="#224"/></>,
  c19: <><path d="M1 1h7l2 2v5H1z" fill="#f4e088" stroke="#443"/><rect x="7" y="8" width="8" height="7" fill="#fff" stroke="#111"/><path d="M9 10l3 3" stroke="#111"/></>,
  c20: <><path d="M3 1h7l3 3v11H3z" fill="#fff" stroke="#334"/><path d="M2 10l5-5 5 5v5H2z" fill="#d04040" stroke="#733"/><rect x="6" y="10" width="4" height="5" fill="#4060c0"/></>,
  /* info box */
  ib1: <><circle cx="3" cy="13" r="1.500" fill="#111"/><path d="M3 13V7h3M6 7h5" stroke="#111"/><rect x="6" y="3" width="12" height="7" fill="#ddd" stroke="#999" strokeDasharray="1 1"/></>,
  ib2: <><rect x="1" y="4" width="14" height="9" fill="none" stroke="#555" strokeDasharray="1 1"/><path d="M13 3l3 3-3 1z" fill="#111"/></>,
  ib3: <><path d="M3 10l6-7 6 6-6 5z" fill="#fff" stroke="#888"/><path d="M6 5l3-3 4 4-3 3z" fill="#222"/></>,
  chair: <><rect x="4" y="1" width="8" height="8" fill="#2a2a55"/><path d="M6 1v8M10 1v8" stroke="#cfc"/><rect x="3" y="9" width="10" height="2" fill="#505090"/><path d="M4 11v4M12 11v4" stroke="#111" strokeWidth="1.500"/></>,
  ixx: <><path d="M3 3l10 10M13 3L3 13" stroke="#111" strokeWidth="2"/><path d="M2 3h12" stroke="#111"/><rect x="5" y="5" width="6" height="6" fill="#333"/></>,
  eye: <><path d="M1 8c4-6 10-6 14 0-4 6-10 6-14 0z" fill="#fff" stroke="#111"/><circle cx="8" cy="8" r="3" fill="#111"/></>,
  t_a: <><rect x="2" y="2" width="12" height="12" fill="#eee"/><path d="M2 14L14 2v12z" fill="#666"/></>,
  t_b: <><path d="M2 9l7-7 5 5-7 7z" fill="#ccc" stroke="#999" strokeDasharray="1 1"/><path d="M5 7l4 4" stroke="#888"/></>,
  t_c: <><rect x="2" y="5" width="9" height="9" fill="#ccc" stroke="#888" strokeDasharray="1 1"/><rect x="3" y="9" width="5" height="5" fill="#777"/><path d="M13 1v4M11 3h4" stroke="#fff"/></>,
  t_d: <><path d="M2 9l7-7 5 5-7 7z" fill="none" stroke="#888" strokeDasharray="1 1"/><rect x="6" y="6" width="4" height="4" fill="#aaa"/></>,
  cube: <><path d="M2 6l8-4 10 3v8l-8 4-10-3z" fill="#b4b4b0" stroke="#333"/><path d="M2 6l10 3 8-4M12 9v8" stroke="#333" fill="none"/><path d="M12 9l8-4v8l-8 4z" fill="#777"/></>,
  slabGlyph: <path d="M3 2h8l4 4H7z" fill="#888"/>,
  widthG: <><path d="M2 3h10M2 1v4M12 1v4" stroke="#111"/><rect x="1" y="10" width="11" height="11" fill="#fff" stroke="#111"/><path d="M3 12l7 7M10 12l-7 7" stroke="#111"/><path d="M17 9v12M15 11l2-2 2 2M15 19l2 2 2-2" fill="none" stroke="#111"/></>,
  chain: <><rect x="4" y="2" width="7" height="9" rx="3" fill="none" stroke="#999"/><rect x="4" y="12" width="7" height="9" rx="3" fill="none" stroke="#999"/></>,
  rot: <><path d="M1 16l8-2" stroke="#333" strokeDasharray="2 1"/><rect x="11" y="4" width="7" height="7" transform="rotate(20 14 8)" fill="#fff" stroke="#111"/><path d="M16 14l3 2 3-2" stroke="#333" fill="none"/></>,
  /* palette 26 x 20 */
  wall: <><path d="M3 7l8-5 5 2v3l6 3v8H8l-5-3z" fill="#5b62b8" stroke="#26286a"/><path d="M8 10l14 0M8 18v-8L3 7" stroke="#26286a" fill="none"/><path d="M11 2l5 2-2 2-5-1z" fill="#dfe0f0"/></>,
  door: <><path d="M1 18h22" stroke="#111"/><rect x="7" y="1" width="11" height="17" fill="#273a8a" stroke="#111"/><rect x="9" y="3" width="8" height="15" fill="#111850"/><rect x="15" y="9" width="1" height="2" fill="#fff"/></>,
  window: <><rect x="5" y="1" width="15" height="17" fill="#111"/><rect x="7" y="4" width="11" height="12" fill="#6a78c8"/><path d="M12.500 4v12M7 9.500h11" stroke="#000" strokeWidth="1.400"/></>,
  sky: <><path d="M1 16l5-7 16-3-4 8z" fill="#888"/><path d="M2 13l5-6 15-2-4 7z" fill="#5b62b8" stroke="#1a1a50"/><path d="M9 4l8-1 3 3-8 2z" fill="#eee" stroke="#222"/></>,
  roof: <><path d="M2 14L11 2l13 12-4 3-11 0z" fill="#6068bc" stroke="#4a4a66"/><path d="M11 2l13 12-4 3z" fill="#888"/></>,
  beam: <><path d="M1 13L20 3l4 3L5 17z" fill="#d0ceca" stroke="#222"/><path d="M1 13l4 4v-3L1 11z" fill="#777"/></>,
  col: <><path d="M9 4h8v13a4 2 0 0 1-8 0z" fill="#5860b8"/><ellipse cx="13" cy="4" rx="4" ry="2" fill="#eee" stroke="#222"/><path d="M9 4v13a4 2 0 0 0 8 0V4" fill="none" stroke="#222"/></>,
  slab: <><path d="M2 10l9-7 6 4 7 0v6l-8 4-6 0z" fill="#e8e6e0" stroke="#222"/><path d="M2 10l8 4 14-1v4L10 18 2 13z" fill="#777" stroke="#222"/></>,
  stair: <><path d="M2 12l8-9 14 3-7 12z" fill="#5b5f88"/><path d="M5 9l14-4M8 12l14-4M11 15l9-3" stroke="#ddd" strokeWidth="2"/></>,
  mesh: <><path d="M1 10c4-6 10-8 14-7l8 6-6 6-10 2z" fill="#e6e4f0" stroke="#222"/><path d="M5 8l12 6M9 5l10 7M5 13L15 4M9 15l9-8" stroke="#44a" /></>,
  curtain: <><path d="M7 2l15-1-5 17L2 18z" fill="#7880d8" stroke="#111"/><path d="M4.500 10l15-1M5 6l15-1M4 14l14-1M12 2L7 18M17 2l-5 16" stroke="#fff"/></>,
  zone: <><path d="M3 3h4v2h5V3l4 3h6v12H3z" fill="#fff" stroke="#111" strokeWidth="1.400"/><path d="M9 9h6M9 12h6M9 15h6" stroke="#333"/></>,
  obj: <><rect x="9" y="1" width="8" height="9" fill="#30306a"/><path d="M11 1v9M13 1v9M15 1v9" stroke="#ccd"/><rect x="7" y="10" width="13" height="3" fill="#3840a0"/><path d="M8 13v6M19 13v6" stroke="#111" strokeWidth="2"/></>,
  dim: <><path d="M1 12h22M4 9v7M20 9v7" stroke="#222"/><text x="6" y="8" fontSize="7.500" fill="#222" fontFamily="Liberation Sans">1.2</text></>,
  lvl: <><path d="M10 6l5 5-5 5-5-5z" fill="#fff" stroke="#111" strokeWidth="2"/><path d="M10 6v5h5l-5 5-5-5h5z" fill="#111"/><text x="14" y="9" fontSize="7.500" fontWeight="700" fill="#222" fontFamily="Liberation Sans">1.2</text></>,
  txt: <text x="3" y="17" fontSize="18" fontWeight="700" fill="#1c1c2c" fontFamily="Liberation Serif">A</text>,
  label: <><path d="M1 14l7-3" stroke="#222" strokeDasharray="2 1"/><path d="M1 14l3-1v2z" fill="#222"/><text x="9" y="13" fontSize="9" fontWeight="700" fill="#222" fontFamily="Liberation Serif">A1</text></>,
  hatch: <><path d="M1 16L7 5h11l7 11z" fill="#c0c4e8" stroke="#6a6c9a"/><path d="M4 16l8-11M8 16l8-11M12 16l8-11M16 16l6-7" stroke="#fff"/><path d="M1 16L7 5h11" fill="none" stroke="#2a2a66"/></>,
  line: <path d="M6 16L18 4" stroke="#222" strokeWidth="1.400"/>,
  arc: <circle cx="13" cy="10" r="7" fill="none" stroke="#222" strokeWidth="1.600"/>,
  poly: <path d="M3 17V12L9 3h14M3 17h20" fill="none" stroke="#222" strokeWidth="1.500"/>,
  drw: <><rect x="2" y="1" width="20" height="18" fill="#f2f1ee" stroke="#223" strokeWidth="1.500"/><path d="M6 13V6h6l2-2h4v3h2v7z" fill="#fff" stroke="#333" strokeDasharray="2 1"/></>,
  cut1: <><path d="M1 8h13l7 3" stroke="#444" fill="none"/><path d="M1 6v3" stroke="#111"/><path d="M17 10l3-3v3z" fill="#111"/></>,
  elev: <><path d="M3 11h18" stroke="#777" strokeDasharray="2 2"/><path d="M12 6l4 5H8z" fill="#111"/></>,
  inter: <><path d="M12 2v16M3 10h18" stroke="#777" strokeDasharray="2 2"/><circle cx="12" cy="10" r="4" fill="#7078c8" stroke="#555"/></>,
  work: <><path d="M2 2h12l8 4v13H2z" fill="#fff" stroke="#223" strokeWidth="1.500"/><path d="M5 16l6-11 8 11z" fill="#f4f4f4" stroke="#224"/><path d="M3 3h9l-3 5H3z" fill="#5a60b0"/></>,
  det: <><circle cx="10" cy="10" r="8" fill="none" stroke="#555" strokeDasharray="1 2"/><path d="M8 1v18M8 7h13M8 13h13" stroke="#222" strokeWidth="2"/><path d="M12 1v18" stroke="#222"/></>,
  ptr: <path d="M8 1v14l4-4 3 6 2-1-3-6h5z" fill="#3c3ca8" stroke="#111"/>,
  run: <rect x="5" y="3" width="16" height="14" rx="2" fill="none" stroke="#333" strokeDasharray="3 2"/>,
  /* tree */
  house: <><path d="M7 1L1 7h2v6h8V7h2z" fill="#e09048" stroke="#7a4a18"/><rect x="5" y="8" width="4" height="5" fill="#fff" stroke="#555"/></>,
  flr: <><path d="M1 3h6v6h8v5H1z" fill="#e8904a" stroke="#6a3a10"/></>,
  fr: <><rect x="0.500" y="2.500" width="13" height="10" fill="#e4e4e0" stroke="#222"/><path d="M3 10V5h4v3h4v2z" fill="#fff" stroke="#222"/></>,
  frh: <><rect x="0.500" y="2.500" width="13" height="10" fill="#fff" stroke="#111"/><path d="M7 5L4 8v2h6V8z" fill="#fff" stroke="#111"/></>,
  frb: <><rect x="0.500" y="2.500" width="13" height="10" fill="#fff" stroke="#111"/><path d="M3 5h8M3 8h8M3 10h8" stroke="#111"/></>,
  frd: <><rect x="0.500" y="2.500" width="13" height="10" fill="#e4e4e0" stroke="#111"/><path d="M4 10l5-5" stroke="#111" strokeWidth="1.500"/></>,
  fr3: <><rect x="0.500" y="2.500" width="13" height="10" fill="#333" stroke="#111"/><circle cx="5" cy="8" r="3" fill="#ddd"/><path d="M10 5v6" stroke="#fff"/></>,
  fr4: <><rect x="0.500" y="2.500" width="13" height="10" fill="#fff" stroke="#111"/><path d="M3 10h7V5" fill="none" stroke="#111" strokeWidth="1.400"/></>,
  cam: <><ellipse cx="7" cy="6" rx="5" ry="4" fill="#a05a28"/><path d="M3 14l4-5 4 5" stroke="#333" fill="none"/><path d="M12 5l3-2v6z" fill="#111"/></>,
  axon: <><path d="M1 7l6-4 7 3v6l-7 3-6-4z" fill="#d8a060" stroke="#6a4a18"/><path d="M1 7l6 3 7-4M7 10v5" stroke="#6a4a18" fill="none"/></>,
  cat: <><rect x="0.500" y="3.500" width="13" height="9" fill="#fff" stroke="#111"/><path d="M3 5v6M6 5v6M9 5v6M12 5v6" stroke="#111"/></>,
  el1: <><rect x="1" y="1" width="11" height="10" fill="#48a0e0" stroke="#1a3a70"/><path d="M3 3h7M3 5h7M3 7h5" stroke="#fff"/><path d="M6 14l4-5 5 5z" fill="#a06a30" stroke="#333"/></>,
  el2: <><rect x="1" y="1" width="11" height="10" fill="#48a0e0" stroke="#1a3a70"/><path d="M3 3h7M3 5h7" stroke="#fff"/><path d="M4 14l4-5 2 2 5 3z" fill="#c02a2a"/><path d="M10 15l3-4 3 4z" fill="#e0a020"/></>,
  el3: <><rect x="1" y="1" width="11" height="10" fill="#48a0e0" stroke="#1a3a70"/><path d="M3 3h7M3 5h7" stroke="#fff"/><rect x="4" y="10" width="11" height="4" fill="#e8e4c8" stroke="#111" strokeDasharray="2 1"/></>,
  el4: <><rect x="1" y="1" width="11" height="10" fill="#48a0e0" stroke="#1a3a70"/><path d="M4 7h8l3 3v5H4z" fill="#fff" stroke="#111"/><path d="M7 14l3-4 3 4z" fill="#a07030"/></>,
  sht: <><rect x="0.500" y="0.500" width="12" height="14" fill="#777"/><rect x="2" y="2" width="9" height="11" fill="#c8ccc8"/><path d="M2 4h9M2 6h9M2 8h9M2 10h9M5 2v11M8 2v11" stroke="#4a5a4a"/></>,
  ixl: <><rect x="0.500" y="2.500" width="13" height="10" fill="#fff" stroke="#111"/><path d="M3 5h1M3 8h1M3 10h1M6 5h6M6 8h6M6 10h6" stroke="#111"/></>,
  lst1: <><rect x="7" y="2" width="8" height="9" fill="#ccc" stroke="#333"/><rect x="1" y="6" width="8" height="8" fill="#5aa0e0" stroke="#1a3a70"/><path d="M9 4h4M9 6h4M9 8h4" stroke="#333"/></>,
  lst2: <><rect x="6" y="5" width="9" height="6" fill="#c09880" stroke="#333"/><rect x="2" y="2" width="7" height="5" fill="#a0b0c8" stroke="#333"/><rect x="1" y="8" width="8" height="6" fill="#5aa0e0" stroke="#1a3a70"/></>,
  lst3: <><path d="M5 1h7l3 3v9H5z" fill="#fff" stroke="#222"/><rect x="1" y="8" width="8" height="6" fill="#5aa0e0" stroke="#1a3a70"/></>,
  rep: <><rect x="2" y="1" width="10" height="13" fill="#fff" stroke="#222"/><path d="M4 4h6M4 6h6M4 8h6M4 10h6M4 12h6" stroke="#222"/></>,
  note: <><path d="M2 1h7l4 4v9H2z" fill="#fff" stroke="#222"/><path d="M4 12l3-4 4 4z" fill="#a07030"/></>,
  /* nav tabs */
  nvPg: <><path d="M2 2h10l3 3v11H2z" fill="#fff" stroke="#445"/><path d="M6 8h8V5l6 5-6 5v-3H6z" fill="#4a70d0" stroke="#123"/></>,
  nvHs: <><path d="M9 1L1 8h2v8h12V8h2z" fill="#d4722c" stroke="#5a3a18"/><path d="M9 1l8 7" stroke="#222"/><rect x="6" y="9" width="6" height="7" fill="#ddb" stroke="#555"/></>,
  nvFl: <><path d="M2 2h7v6h7v7H2z" fill="#f0dc80" stroke="#555"/><path d="M2 10h14v5H2z" fill="#e0a050"/></>,
  nvSh: <><rect x="1" y="2" width="15" height="13" fill="#fff" stroke="#111"/><path d="M10 2v13M10 7h6M10 11h6" stroke="#111"/></>,
  nvCp: <><rect x="2" y="2" width="8" height="10" fill="#fff" stroke="#111"/><rect x="6" y="6" width="8" height="9" fill="#c0ccf0" stroke="#224"/></>,
  newFl: <><path d="M2 6h8l2 2h6v10H2z" fill="#e0904a" stroke="#6a3a10"/><path d="M16 1l1 3 3 1-3 1-1 3-1-3-3-1 3-1z" fill="#f0e040"/></>,
  redX: <path d="M3 3l14 14M17 3L3 17" stroke="#d81818" strokeWidth="3"/>,
  /* bottom bar */
  b1: <><rect x="1" y="1" width="14" height="14" fill="#f0eee8" stroke="#333"/><path d="M3 13V6M3 13h7" stroke="#333"/><path d="M8 9l2-2 2 2v4H8z" fill="#d08020"/></>,
  b2: <><rect x="1" y="1" width="10" height="14" fill="#fff" stroke="#333"/><circle cx="9" cy="8" r="3.500" fill="none" stroke="#224" strokeWidth="1.400"/><path d="M11 11l3 3" stroke="#224" strokeWidth="2"/></>,
  b3: <><rect x="2" y="2" width="12" height="12" fill="#fff" stroke="#333"/><path d="M3 10l9-6M10 4h3v3M3 8v3h3" stroke="#334" fill="none"/></>,
  qpm: <><circle cx="7" cy="6" r="4.500" fill="none" stroke="#3c66c8" strokeWidth="1.500"/><path d="M9.500 9.500l3 4" stroke="#112" strokeWidth="2"/><path d="M13 2v6M10.500 4h5M10.500 11h5" stroke="#111"/></>,
  qp: <><circle cx="7" cy="7" r="4.500" fill="#fff" stroke="#333" strokeWidth="1.300"/><path d="M5 7h4M7 5v4" stroke="#333"/><path d="M10 10l4 4" stroke="#333" strokeWidth="2"/></>,
  qm: <><circle cx="7" cy="7" r="4.500" fill="#fff" stroke="#333" strokeWidth="1.300"/><path d="M5 7h4" stroke="#333"/><path d="M10 10l4 4" stroke="#333" strokeWidth="2"/></>,
  hand: <path d="M5 8V3h1v4-5h1v5V2h1v5V3h1v5l2-1v3l-3 4H6L3 9z" fill="#fff" stroke="#333" strokeWidth=".8"/>,
  qd: <><circle cx="7" cy="7" r="5" fill="none" stroke="#333" strokeDasharray="2 1"/><path d="M4 4h6v6H4z" fill="none" stroke="#333"/></>,
  orb: <><circle cx="8" cy="8" r="5" fill="none" stroke="#333" strokeDasharray="3 1"/><path d="M8 3l3-2v4zM9 8l3 3" fill="#333" stroke="#333"/></>,
  qprev: <><circle cx="9" cy="6" r="4.500" fill="none" stroke="#3c66c8" strokeWidth="1.500"/><path d="M11 9l3 4" stroke="#112" strokeWidth="2"/><path d="M1 7l4-3v6z" fill="#111"/></>,
  qnext: <><circle cx="6" cy="6" r="4.500" fill="none" stroke="#aaa" strokeWidth="1.500"/><path d="M8 9l3 4" stroke="#aaa" strokeWidth="2"/><path d="M15 7l-4-3v6z" fill="#888"/></>,
  /* coord bar */
  cx: <path d="M5 5l8 8M13 5l-8 8" stroke="#222" strokeWidth="2"/>,
  g1: <><path d="M1 16L16 3" stroke="#222" strokeWidth="1.500"/><path d="M2 3h14M2 7h14M2 11h14M5 1v16M9 1v16M13 1v16" stroke="#999" strokeDasharray="1 2"/><path d="M10 5l4-1-1 4z" fill="#111"/></>,
  g2: <><path d="M3 1v15h17" fill="none" stroke="#111"/><path d="M1 3l2-2 2 2M18 14l2 2-2 2" fill="none" stroke="#111"/><path d="M3 5h14M3 9h14M8 1v14M13 1v14" stroke="#999" strokeDasharray="1 2"/></>,
  plus: <><path d="M9 4v12M3 10h12" stroke="#333"/><path d="M18 13l3 3-3 2z" fill="#111"/></>,
  man: <><path d="M4 2l5 6 5-6 3 3-5 6v8H6v-8L1 5z" fill="#888"/><path d="M17 12c2 2 2 4-1 6" fill="none" stroke="#555"/></>,
  trip: <><path d="M1 4l9 13L18 4z" fill="none" stroke="#333"/><path d="M14 2v14" stroke="#888" strokeDasharray="1 2"/><path d="M13 10l4 3-2 0 1 3-1 1-2-3-1 1z" fill="#222"/></>,
  diag: <><path d="M3 17L16 4" stroke="#222"/><path d="M6 12h4M10 8v4" stroke="#222"/><path d="M14 2l4 4" stroke="#888" strokeDasharray="1 1"/></>,
  ang: <><path d="M4 10L11 3M4 10l7 6" stroke="#333" fill="none"/><path d="M17 10l3 2-3 2z" fill="#111"/></>,
  pp: <><path d="M9 1v8M5 5h8" stroke="#999"/><path d="M5 16l8-5M5 16h8" stroke="#777"/><path d="M17 14l3 2-3 2z" fill="#888"/></>,
  nodes: <><rect x="4" y="2" width="15" height="13" fill="none" stroke="#333"/><path d="M1 15h16M4 1v16" stroke="#333"/><circle cx="8" cy="7" r="2.500" fill="none" stroke="#333"/><circle cx="4" cy="16" r="2" fill="#fff" stroke="#222"/><circle cx="16" cy="16" r="2" fill="#fff" stroke="#222"/><path d="M20 11l3 3-3 3z" fill="#111"/></>,
  wand: <><path d="M10 9l7 8" stroke="#222" strokeWidth="2"/><path d="M3 3h1M7 2h1M10 4h1M4 7h1M8 6h1M3 11h1M6 10h1M5 14h1M9 12h1" stroke="#555"/></>,
  mid: <><path d="M3 5l14 11" stroke="#222"/><path d="M11 8l4 3-3 2z" fill="#111"/></>,
  /* task */
  start: <><path d="M1 2l6 1v5H1z" fill="#d84a28"/><path d="M8 3l6 1v5H8z" fill="#58a838"/><path d="M1 9h6v5l-6-1z" fill="#3868c8"/><path d="M8 10h6v5l-6-1z" fill="#e8c030"/></>,
  clockI: <><rect x="2" y="1" width="12" height="14" fill="#f0b030" stroke="#b07010"/><circle cx="8" cy="8" r="4" fill="#fff" stroke="#b07010"/><path d="M8 5v3h2" stroke="#b07010" fill="none"/></>,
  ie: <><circle cx="8" cy="8" r="5" fill="none" stroke="#2a80d8" strokeWidth="2"/><path d="M3 8h10" stroke="#2a80d8" strokeWidth="1.500"/><path d="M2 13c3 1 8-3 12-11" fill="none" stroke="#e8a020" strokeWidth="1.200"/></>,
  outlook: <><rect x="3" y="1" width="10" height="14" rx="2" fill="#4a90d8" stroke="#2a5a98"/><path d="M8 4a4 4 0 1 0 3 6" stroke="#fff" fill="none" strokeWidth="1.500"/></>,
  chrome: <><circle cx="8" cy="8" r="7" fill="#d83a2a"/><path d="M8 8L2 12a7 7 0 0 0 10 2z" fill="#3a9a40"/><path d="M8 8l5-4a7 7 0 0 1-1 10z" fill="#f0c820"/><circle cx="8" cy="8" r="3" fill="#3a70d8" stroke="#fff"/></>,
  max: <><text x="2" y="9" fontSize="9" fontWeight="700" fill="#1e6a8a" fontFamily="Liberation Sans">M</text><path d="M2 11h11" stroke="#999"/><text x="2" y="16" fontSize="6" fill="#444" fontFamily="Liberation Sans">3DS</text></>,
  folder: <><path d="M1 4h5l1 2h8v9H1z" fill="#f4e080" stroke="#a08a30"/><path d="M1 8h14v7H1z" fill="#f8ea98" stroke="#a08a30"/></>,
  help: <><rect x="2" y="1" width="12" height="14" fill="#fff" stroke="#333"/><text x="5" y="12" fontSize="11" fill="#333" fontFamily="Liberation Sans">?</text></>,
  net: <><path d="M5 1h6v5H5z" fill="none" stroke="#222"/><path d="M2 3h6v5H2z" fill="#d4d0c8" stroke="#222"/><path d="M6 11l4 0-2 3z" fill="#222"/></>,
  ring: <><circle cx="8" cy="8" r="6.500" fill="#1fa85a"/><circle cx="8" cy="8" r="3.500" fill="#f3f0e0"/><circle cx="8" cy="8" r="1.700" fill="#1a7a3a"/></>,
  auto: <><rect x="4" y="1" width="8" height="5" fill="#fff" stroke="#222"/><rect x="2" y="6" width="12" height="6" fill="#777" stroke="#222"/><path d="M4 9h8M4 14h8" stroke="#222"/></>,
};

/* ---------- data ---------- */
const tb1 = [
  ['i','doc',22],['i','open',19],['d',10],['i','save',22],['i','print',21],['s',10],
  ['i','cut',19],['i','copy',24],['i','paste',18],['s',12],['i','undo',20],['i','redo',19],['s',14],
  ['i','find',19],['i','drop1',21],['i','drop2',18],['s',13],
  ['p','tri',22],['d',12],['p','snapx',22],['d',13],['p','lrule',22],['d',12],['i','dots',20],['d',15],
  ['i','rul',20],['i','layer',20],['d',15],['i','small',20],['d',14],['p','hat',22],
  ['i','rul2',20],['i','x',22],['s',10],['i','t1',21],['i','t2',22],['i','t3',22],['i','t4',22],['i','t5',22],
  ['i','t6',22],['i','t7',20],['s',10],['p','t8',23],['i','pen',21],
];
const tb1b = [
  ['p','plan',23],['d',16],['i','sec',19],['d',19],['i','box',18],['d',18],['s',6],['t'],['d',13],['s',7],['i','globe',24],['i','walk',28],
];
const tb2Left = ['h1','h2','h3','h4','h5','h6','h7','h8','h9','h10'];
const tb2On = { h1: 1, h3: 1, h6: 1, h7: 1, h8: 1, h9: 1, h10: 1, e6: 1, c18: 1 };
const tb2Mid = ['d1','d2','d3','d4','d5'];
const tb2Right = ['e1','e2','e3','e4','e5','e6','a1','a2','a3','a4','c1','c2','c3','c4','c5','c6','c7','c8','c9','c10','c11','c12','c13','c14','c15','c16','c17','c18','c19','c20'];

const palA = [['wall','Стена'],['door','Дверь'],['window','Окно'],['sky','Светов...'],['roof','Крыша'],['beam','Балка'],['col','Колонна'],['slab','Перекр...'],['stair','Лестница'],['mesh','3D-сетка'],['curtain','Навесн...'],['zone','Зона'],['obj','Объект']];
const palB = [['dim','Линей...'],['lvl','Отме...'],['txt','Текст'],['label','Вынос...'],['hatch','Штри...'],['line','Линия'],['arc','Дуга/...'],['poly','Ломаная'],['drw','Чертеж'],['cut1','Разрез'],['elev','Фасад'],['inter','Внутр...'],['work','Рабоч...'],['det','Деталь']];

/* lvl, expander (0 none, 1 minus, 2 plus), icon, label, bold */
const tree = [
  [0,1,'house','Название проекта'],
  [1,1,'fr','Этажи'],
  [2,0,'flr','5. Этаж'],[2,0,'flr','4. Этаж'],[2,0,'flr','3. Третий эта',1],[2,0,'flr','2. Второй этаж'],[2,0,'flr','1. Первый этаж'],
  [1,0,'frh','Разрезы'],[1,0,'frh','Фасады'],[1,0,'frb','Внутренние виды'],[1,0,'frd','Рабочие листы'],[1,0,'fr4','Детали'],[1,0,'fr3','3D-документы'],
  [1,1,'fr3','3D'],
  [2,0,'cam','Общая перспек'],[2,0,'axon','Общая аксоном'],
  [1,1,'cat','Каталоги'],
  [2,1,'el1','Элемент'],
  [3,0,'sht','Смета двер'],[3,0,'sht','Смета объе'],[3,0,'sht','Смета окон'],[3,0,'sht','Смета стен'],
  [2,2,'el2','Компонента'],
  [1,1,'ixl','Индексы проекта'],
  [2,0,'lst1','Индекс листов'],[2,0,'lst2','Список видов'],[2,0,'lst3','Список чертеж'],
  [1,1,'fr4','Сметы'],
  [2,2,'el3','Элементы'],[2,2,'el2','Компоненты'],[2,2,'el4','Библиотека по'],
  [1,1,'fr4','Инфо'],
  [2,0,'rep','Отчет'],[2,0,'note','Примечания и з'],
  [0,2,'fr4','Справка'],
];
const guides = [[11,0,34],[31,1,31],[48,1,6],[48,13,15],[48,16,22],[48,23,26],[48,27,30],[48,31,33],[68,17,21]];
const rowSpec = {
  0: { pad: 7, dots: 7, ic: 14, ml: 2 },
  1: { pad: 27, dots: 5, ic: 14, ml: 2 },
  2: { pad: 44, dots: 5, ic: 16, ml: 2 },
  3: { pad: 64, dots: 5, ic: 12, ml: 5 },
};

/* ---------- sub-parts ---------- */
const ToolItems = ({ items }) => items.map((it, i) => {
  const [k, a, b] = it;
  if (k === 's') return <ToolSep key={i} $w={a} />;
  if (k === 'd') return <Drop key={i} $w={a} />;
  if (k === 't') return <GoText key={i}>Перейти</GoText>;
  return <Tool key={i} $w={b} $on={k === 'p'}><Ic n={a} /></Tool>;
});

const Bolt = ({ x, faded }) => (
  <g transform={`translate(${x} 27) rotate(-40)`} opacity={faded ? 0.45 : 1}>
    <rect x="-3" y="-8" width="6" height="16" fill="#f8f8f6" stroke="#222" strokeDasharray={faded ? '1 1' : undefined} />
    {!faded && <path d="M-3-5l6-3M-3-1l6-3M-3 3l6-3M-3 7l6-3" stroke="#222" />}
  </g>
);
const Diag = ({ arc, faded, below, ml }) => (
  <Diagram width="90" height={below ? 46 : 38} viewBox={`0 0 90 ${below ? 46 : 38}`} $ml={ml}>
    <path d={arc} fill="none" stroke="#333" strokeDasharray="1 1.500" />
    <path d="M9 14l3 2M9 17l3-2" stroke="#333" />
    <Bolt x={14} /><Bolt x={33} /><Bolt x={52} /><Bolt x={71} faded={faded} />
    {below && <path d="M14 38v7h24v-7" fill="none" stroke="#222" strokeDasharray="1 1.500" />}
  </Diagram>
);

const Nd = ({ x, y }) => <path d={`M${x} ${y - 3}l3 3-3 3-3-3z`} fill="#e4c4e6" stroke="#a24aa0" strokeWidth="1" />;
const nodes = [[232,288],[232,307],[223,297],[242,297],[256,288],[256,297],[256,307],[313,297],[322,297],[331,297],[390,288],[390,297],[390,307],[411,288],[411,307],[402,297],[421,297],[313,883],[322,883],[331,883]];

const Drawing = () => (
  <Canvas viewBox="92 136 1333 766">
    <rect x="228" y="288" width="192" height="19" rx="9" fill="#7df37d" stroke="#52c852" strokeWidth="1.500" />
    <rect x="315" y="300" width="18" height="584" fill="#7df37d" stroke="#52c852" strokeWidth="1.500" />
    <rect x="316" y="289" width="16" height="18" fill="#7df37d" />
    <g transform="scale(1.0204)" fill="none" stroke="#2a2a2a" strokeWidth="1">
      <path stroke="#dcdcdc" d="M90 754H1397" />
      <path d="M90 224C170 215 240 208 318 208C440 208 560 222 650 238C730 252 800 268 860 285" />
      <path stroke="#8a8a8a" d="M90 230L150 223L240 214" />
      <path stroke="#777" d="M90 383C160 375 240 368 320 369" />
      <path d="M320 369C500 372 700 410 860 458" />
      <path d="M90 350C105 365 125 377 150 379C190 378 215 370 230 350C245 325 240 300 240 280C240 240 275 208 317 208C360 208 393 245 393 280C393 320 430 378 490 377C530 378 558 340 560 310C562 265 595 237 637 237C680 237 715 275 715 315C712 335 708 345 712 360C722 395 760 435 800 435C830 435 850 425 870 410" />
      <path d="M1308 486L1397 541M1108 556L1397 737" />
      <path d="M1315 500C1318 540 1300 570 1290 590C1280 630 1300 680 1340 700C1360 708 1380 708 1397 706" />
      <path d="M150 222L208 885" />
      <path d="M650 238L537 885" />
      <path d="M317 208V865" />
      <path d="M890 557L770 885M1225 557L1035 885M1397 843L1360 885M90 843L96 885" />
      <path stroke="#2f8a3c" d="M96 885C120 870 200 862 317 860C400 860 480 868 545 885" />
      <path stroke="#2f8a3c" d="M160 870C230 865 400 865 480 870" />
    </g>
    <circle cx="233" cy="297" r="9" fill="none" stroke="#2b8a2b" />
    <circle cx="412" cy="297" r="9" fill="none" stroke="#2b8a2b" />
    <circle cx="233" cy="297" r="3" fill="#2a1a9a" />
    <circle cx="412" cy="297" r="3" fill="#2a1a9a" />
    <path d="M242 297h14M390 297h12" stroke="#2b8a2b" />
    {nodes.map(([x, y], i) => <Nd key={i} x={x} y={y} />)}
  </Canvas>
);

export default function App() {
  return (
    <>
      <Global />
      <Screen>
        <TitleBar>
          <Ic n="app" />
          <span>планы - Graphisoft ArchiCAD 13 - [планы / 3. Третий этаж]</span>
          <Grow />
          <WinBtns><WinBtn>_</WinBtn><WinBtn>❐</WinBtn><WinBtn>✕</WinBtn></WinBtns>
        </TitleBar>
        <MenuBar>
          <MenuIcon><Ic n="menuDoc" /></MenuIcon>
          <MenuItem $w={36}>Файл</MenuItem>
          <MenuItem $w={58}>Редактор</MenuItem>
          <MenuItem $w={29}>Вид</MenuItem>
          <MenuItem $w={98}>Конструирование</MenuItem>
          <MenuItem $w={58}>Документ</MenuItem>
          <MenuItem $w={66}>Параметры</MenuItem>
          <MenuItem $w={58}>Teamwork</MenuItem>
          <MenuItem $w={37}>Окно</MenuItem>
          <MenuItem $w={50}>Справка</MenuItem>
          <Grow />
          <WinBtns><WinBtn>_</WinBtn><WinBtn>❐</WinBtn><WinBtn>✕</WinBtn></WinBtns>
        </MenuBar>
        <ToolRow>
          <ToolStrip><ToolItems items={tb1} /></ToolStrip>
          <ToolStrip $ml={37}><ToolItems items={tb1b} /></ToolStrip>
        </ToolRow>
        <ToolRow>
          <ToolStrip>
            {tb2Left.map(n => <Tool key={n} $w={25} $on={tb2On[n]}><Ic n={n} /></Tool>)}
            <ToolSep $w={13} />
            {tb2Mid.map(n => <Tool key={n} $w={25} $on={tb2On[n]}><Ic n={n} /></Tool>)}
            <ToolSep $w={11} />
            {tb2Right.map(n => <Tool key={n} $w={25.7} $on={tb2On[n]}><Ic n={n} /></Tool>)}
          </ToolStrip>
        </ToolRow>

        <Body>
          <Palette>
            <PanelTitle><span>Панель ...</span><span>✕</span></PanelTitle>
            <PickBtn>Выборка</PickBtn>
            <PalItem $sel $h={20}><PalIcon><Ic n="ptr" w={26} h={20} /></PalIcon>Указат...</PalItem>
            <PalItem $h={24}><PalIcon><Ic n="run" w={26} h={20} /></PalIcon>Бегущ...</PalItem>
            <PalHead><TriDown />Конструирс</PalHead>
            {palA.map(([n, l]) => <PalItem key={n}><PalIcon><Ic n={n} w={26} h={20} /></PalIcon>{l}</PalItem>)}
            <PalHead><TriDown />Документир</PalHead>
            {palB.map(([n, l]) => <PalItem key={n}><PalIcon><Ic n={n} w={26} h={20} /></PalIcon>{l}</PalItem>)}
            <PalHead><TriRight />Еще</PalHead>
          </Palette>

          <InfoArea>
            <InfoGrip><span>✕</span><GripLabel>Ин</GripLabel></InfoGrip>
            <InfoRow>
              <InfoGroup $w={152}>
                <InfoStack $w={114}>
                  <InfoLabel>Всего выбранных: 6</InfoLabel>
                  <InfoGroup $w={114}>
                    <Bevel $w={37} $h={19}><Ic n="ib1" w={20} /><SmallTriR /></Bevel>
                    <Bevel $w={37} $h={19}><Ic n="ib2" /><SmallTriR /></Bevel>
                    <Bevel $w={37} $h={19} $ml={1}><Ic n="ib3" /></Bevel>
                  </InfoGroup>
                </InfoStack>
                <Bevel $w={37} $h={27}><Ic n="chair" /></Bevel>
              </InfoGroup>
              <Rule $ml={2} />
              <InfoGroup $w={152}>
                <Bevel $w={30} $h={27}><Ic n="ixx" /></Bevel>
                <Bevel $w={121} $h={27}><Ic n="eye" />Интерьер - Ме...<SmallTriR /></Bevel>
              </InfoGroup>
              <Rule $ml={2} />
              <InfoStack $w={150} $gap={3} $ml={-2}>
                <InfoGroup $w={150} $ml={2}><BoldTitle>Цилиндр 13</BoldTitle><Grow /><Bevel $w={14} $h={13}><SmallTriR /></Bevel></InfoGroup>
                <InfoGroup $w={150}>
                  <Grow />
                  <Bevel $w={28} $h={17}><ArrowLeft /><ArrowLeft /></Bevel>
                  <Bevel $w={25} $h={17} $ml={1}><ArrowRight /><ArrowRight /></Bevel>
                </InfoGroup>
              </InfoStack>
              <Rule $ml={6} />
              <InfoGroup $w={153} $ml={1}>
                <Bevel $w={37} $h={27} $on><Ic n="t_a" /></Bevel>
                <Bevel $w={38} $h={27}><Ic n="t_b" /></Bevel>
                <Bevel $w={37} $h={27}><Ic n="t_c" /></Bevel>
                <Bevel $w={37} $h={27}><Ic n="t_d" /></Bevel>
              </InfoGroup>
              <Bevel $w={150} $h={27} $ml={2}>План этажа и разрез...</Bevel>
              <Rule $ml={5} />
              <InfoGroup $w={153} $ml={21}>
                <InfoStack $w={33} $gap={2}>
                  <Ic n="cube" w={24} h={20} />
                  <Ic n="slabGlyph" w={18} h={10} vb="0 0 16 10" />
                </InfoStack>
                <InfoStack $w={20}>
                  <MiniLabel $h={17}>в:</MiniLabel>
                  <MiniLabel $h={15}>н:</MiniLabel>
                </InfoStack>
                <InfoStack $w={76} $gap={1}>
                  <Field $w={76} $h={16} $off>6200</Field>
                  <Field $w={76}>6200</Field>
                </InfoStack>
              </InfoGroup>
              <Rule $ml={-1} />
              <InfoGroup $w={110} $ml={26}>
                <Ic n="widthG" w={24} h={26} vb="0 0 22 24" />
                <InfoStack $w={57} $gap={1} $ml={5}>
                  <Field $w={57} $h={16} $off>105</Field>
                  <Field $w={57} $off>3</Field>
                </InfoStack>
                <Bevel $w={15} $h={33} $ml={9}><Ic n="chain" w={13} h={24} vb="0 0 15 24" /></Bevel>
              </InfoGroup>
              <CheckCol>
                <CheckBoxes>
                  <Field $w={11} $h={11} />
                  <Bevel $w={11} $h={11}><Ic n="x" w={9} h={9} vb="0 0 16 16" /></Bevel>
                  <BoxDotted />
                </CheckBoxes>
                <Ic n="rot" w={24} h={20} />
              </CheckCol>
              <InfoStack $w={75} $ml={5}>
                <InfoGroup $w={75}>
                  <MiniLabel $w={60} $h={16}>Относителы</MiniLabel>
                  <Bevel $w={13} $h={14}><SmallTriR /></Bevel>
                </InfoGroup>
                <Field $w={75}>90,00°</Field>
              </InfoStack>
              <Rule $ml={3} />
              <InfoStack $w={150}>
                <MiniLabel $w={150} $h={15}>Собственный этаж:</MiniLabel>
                <SelectBox>Текущий (3. Третий этаж)<SelectArrow /></SelectBox>
              </InfoStack>
            </InfoRow>
            <ScrollStrip>
              <StripBtn $w={15}><ArrowLeft /></StripBtn>
              <StripBtn $w={1097} />
              <StripBtn $w={15} $last><ArrowRight /></StripBtn>
            </ScrollStrip>
          </InfoArea>

          <CanvasCol>
            <CanvasRow>
              <Drawing />
              <VScroll>
                <ScrollBtn><ArrowUp /></ScrollBtn>
                <Thumb />
                <ScrollBtn><ArrowDown /></ScrollBtn>
              </VScroll>
            </CanvasRow>
            <BottomBar>
              <BarBtn $w={22}><Ic n="b1" /></BarBtn>
              <BarBtn $w={22}><Ic n="b2" /></BarBtn>
              <BarBtn $w={23}><Ic n="b3" /></BarBtn>
              <BarBtn $w={60}>1:100</BarBtn>
              <BarBtn $w={74}>15221 %</BarBtn>
              <BarBtn $w={16}><ArrowRight /></BarBtn>
              <BarBtn $w={22} $ml={4}><Ic n="qpm" /></BarBtn>
              <BarBtn $w={22}><Ic n="qp" /></BarBtn>
              <BarBtn $w={23}><Ic n="qm" /></BarBtn>
              <BarBtn $w={23}><Ic n="hand" /></BarBtn>
              <BarBtn $w={24}><Ic n="qd" /></BarBtn>
              <BarBtn $w={22}><Ic n="orb" /></BarBtn>
              <BarBtn $w={66}>0,00°</BarBtn>
              <BarBtn $w={25} $ml={4}><Ic n="qprev" /></BarBtn>
              <BarBtn $w={23}><Ic n="qnext" /></BarBtn>
              <BarBtn $w={15}><ArrowLeft /></BarBtn>
              <BarBtn $w={7} $ml={498} />
              <BarEnd $w={15} $ml={320}><ArrowRight /></BarEnd>
            </BottomBar>
          </CanvasCol>

          <Nav>
            <NavTitle><span>Навигатор - Карта п...</span><span>✕</span></NavTitle>
            <NavTabs>
              <NavTab $w={28}><Ic n="nvPg" w={20} h={18} vb="0 0 20 18" /><SmallTriR /></NavTab>
              <NavTab $w={29} $ml={6} $on><Ic n="nvHs" w={18} h={17} vb="0 0 18 17" /></NavTab>
              <NavTab $w={27} $ml={2}><Ic n="nvFl" w={18} h={17} vb="0 0 18 17" /></NavTab>
              <NavTab $w={27} $ml={2}><Ic n="nvSh" w={18} h={17} vb="0 0 18 17" /></NavTab>
              <NavTab $w={27} $ml={2}><Ic n="nvCp" /></NavTab>
            </NavTabs>
            <Tree>
              {guides.map(([x, a, b], i) => <Guide key={i} $x={x} $from={a} $to={b} />)}
              {tree.map(([lvl, exp, ic, label, bold], i) => {
                const s = rowSpec[lvl];
                return (
                  <TreeRow key={i} $pad={s.pad}>
                    {exp ? <Expander $plus={exp === 2} /> : <Dots $w={9} />}
                    <Dots $w={s.dots} />
                    <TreeIcon $w={s.ic}><Ic n={ic} /></TreeIcon>
                    <TreeText $ml={s.ml} $bold={bold}>{label}</TreeText>
                  </TreeRow>
                );
              })}
            </Tree>
            <NavScroll>
              <NavScrollBtn $w={17}><ArrowLeft /></NavScrollBtn>
              <NavScrollBtn $w={92} $mr={27} />
              <NavScrollBtn $w={15}><ArrowRight /></NavScrollBtn>
            </NavScroll>
            <NavActions>
              <NavSquare $w={22}><Ic n="newFl" w={20} h={20} /></NavSquare>
              <NavSquare $w={22}><Ic n="redX" w={20} h={20} /></NavSquare>
            </NavActions>
            <SpecHead><TriDown />Спецификации</SpecHead>
            <SpecRow>
              <Ic n="flr" w={13} h={14} vb="0 0 16 16" />
              <SpecInput $w={30} $off>3.</SpecInput>
              <SpecInput $w={104} $ml={2}>Третий этаж</SpecInput>
            </SpecRow>
            <ParamBtn $w={126} $h={20}>Параметры...</ParamBtn>
          </Nav>
        </Body>

        <CoordBar>
          <CoordInner>
            <Glass $w={23}><Ic n="cx" w={18} h={18} /></Glass>
            <Glass $w={23} $ml={5}><Ic n="g1" w={18} h={18} /></Glass>
            <Glass $w={28} $ml={5}><Ic n="g2" w={21} h={18} /></Glass>
            <Glass $w={26} $ml={5}><Ic n="plus" w={22} h={20} /></Glass>
            <CoordSep $ml={5} />
            <TriBox $ml={4} />
            <CoordPair $ml={6} $label={21} $field={86}>
              <CoordTag>Δx:</CoordTag><CoordValue>114566</CoordValue>
              <CoordTag>Δy:</CoordTag><CoordValue>48105</CoordValue>
            </CoordPair>
            <CoordSep $ml={6} />
            <TriBox $ml={3} />
            <CoordPair $ml={9} $label={18} $field={87}>
              <CoordTag>Δr:</CoordTag><CoordValue>124256</CoordValue>
              <CoordTag>a:</CoordTag><CoordValue>22,78°</CoordValue>
            </CoordPair>
            <CoordSep $ml={5} />
            <Glass $w={25} $ml={3}><Ic n="man" w={20} h={20} /></Glass>
            <CoordPair $ml={11} $label={19} $field={88}>
              <CoordTag>Δz:</CoordTag><CoordValue>6200</CoordValue>
              <CoordNote>отн. Проектный нуль</CoordNote>
            </CoordPair>
            <TinyArrow $ml={28}><SmallTriR /></TinyArrow>
            <CoordSep $ml={6} />
            <Glass $w={27} $ml={7} $on><Ic n="trip" w={20} h={20} /></Glass>
            <TinyArrow $ml={2}><SmallTriR /></TinyArrow>
            <Glass $w={25} $ml={6}><Ic n="diag" w={20} h={20} /></Glass>
            <Glass $w={28} $ml={10}><Ic n="ang" w={22} h={20} /></Glass>
            <Glass $w={26} $ml={6}><Ic n="pp" w={22} h={20} /></Glass>
            <Glass $w={26} $ml={6}><Ic n="nodes" w={24} h={20} /></Glass>
            <Glass $w={26} $ml={6}><Ic n="wand" w={20} h={20} /></Glass>
            <CoordSep $ml={3} />
            <Glass $w={23} $ml={3}><Ic n="mid" w={20} h={20} /></Glass>
            <SnapText>Середина<br />2</SnapText>
            <TinyArrow $ml={-2}><SmallTriR /></TinyArrow>
            <CoordSep $ml={5} />
            <GhostBtn $w={62} $ml={4}>ОК</GhostBtn>
            <GhostBtn $w={62} $ml={10}>Отменить</GhostBtn>
          </CoordInner>
        </CoordBar>

        <StatusBar>
          <Ic n="auto" />
          <span>Автосохранение: 04 сек...</span>
          <StatusBox />
        </StatusBar>

        <Taskbar>
          <Start><Ic n="start" w={14} h={16} vb="0 0 15 16" />Пуск</Start>
          <QuickIcon $w={18} $ml={7}><Ic n="clockI" /></QuickIcon>
          <QuickIcon $w={18} $ml={8}><Ic n="ie" /></QuickIcon>
          <QuickIcon $w={18}><Ic n="outlook" /></QuickIcon>
          <QuickIcon $w={21} $ml={3}>»</QuickIcon>
          <TaskBtn $w={151} $ml={-1}><Ic n="chrome" />Axo Light - Google Chrome</TaskBtn>
          <TaskBtn $w={152} $ml={4}><Ic n="app" />пробую - Graphisoft Arc...</TaskBtn>
          <TaskBtn $w={152} $ml={4}><Ic n="clockI" />Входящие - Microsoft O...</TaskBtn>
          <TaskBtn $w={152} $ml={4}><Ic n="max" />Untitled - Autodesk 3ds ...</TaskBtn>
          <TaskBtn $w={151} $on><Ic n="app" />планы - Graphisoft A...</TaskBtn>
          <TaskBtn $w={152} $ml={4}><Ic n="folder" />урок</TaskBtn>
          <TaskBtn $w={152}><Ic n="folder" />Рабочий стол</TaskBtn>
          <Lang>RU</Lang>
          <TraySep />
          <QuickIcon $w={16} $ml={5}><Ic n="help" /></QuickIcon>
          <TraySep />
          <QuickIcon $w={14} $ml={1}><Ic n="net" /></QuickIcon>
          <Clock>« <Ic n="ring" /> 11:33</Clock>
        </Taskbar>

        <Dialog>
          <DlgTitle>
            <Ic n="app" />
            Тиражирование
            <Grow />
            <TitleGlyphs>
              <WinBtn>?</WinBtn>
              <WinBtn>✕</WinBtn>
            </TitleGlyphs>
          </DlgTitle>
          <DlgBody>
            <DlgCaption>Выбор варианта:</DlgCaption>
            <RadioRow>
              <RadioCell><Radio />перемещение</RadioCell>
              <RadioCell><Radio $on />поворот</RadioCell>
              <RadioCell><Radio />верт. смещение</RadioCell>
              <RadioCell><Radio />матрица</RadioCell>
            </RadioRow>
            <DlgRule $m="7px 4px 0 2px" />
            <CountGrid>
              <DlgLabel>Количество<br />дубликатов:</DlgLabel>
              <DlgField $mt={10} $h={22}><Selected>36</Selected></DlgField>
              <DlgLabel>Вертикальное<br />смещение:</DlgLabel>
              <DlgField $mt={1} $h={20}>0</DlgField>
            </CountGrid>
            <OptGrid>
              <Opt>
                <RadioCell><Radio />С приращением</RadioCell>
                <Diag ml={29} arc="M14 16C17 7 30 7 33 16" />
              </Opt>
              <Opt>
                <RadioCell><Radio $on />С распределением</RadioCell>
                <Diag ml={-11} arc="M14 16C22 2 62 2 71 16" />
              </Opt>
              <Opt>
                <RadioCell><Radio />С распространением...</RadioCell>
                <Diag ml={26} below arc="M14 16C22 2 62 2 71 16" />
              </Opt>
              <Opt>
                <RadioCell><Radio />С распределением -1</RadioCell>
                <Diag ml={-11} faded arc="M14 16C22 2 62 2 71 16" />
              </Opt>
            </OptGrid>
            <CheckRow><Check />Установить собственный этаж по возвышению</CheckRow>
            <DlgRule $m="5px 4px 0 2px" />
            <DlgButtons>
              <DlgBtn>Отменить</DlgBtn>
              <DlgBtn $def>ОК</DlgBtn>
            </DlgButtons>
            <RedMark $x={112} $y={45} $w={81} />
            <RedMark $x={149} $y={93} $w={65} />
            <RedMark $x={212} $y={192} $w={92} />
          </DlgBody>
        </Dialog>
      </Screen>
    </>
  );
}
